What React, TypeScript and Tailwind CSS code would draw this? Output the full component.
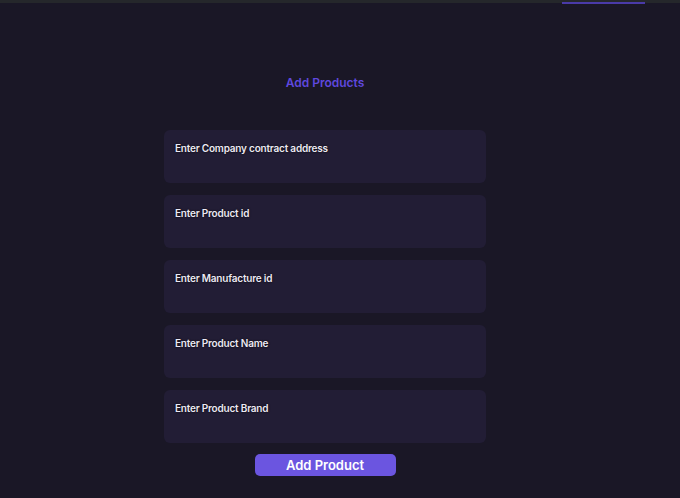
const fields = [
  'Enter Company contract address',
  'Enter Product id',
  'Enter Manufacture id',
  'Enter Product Name',
  'Enter Product Brand',
];

export default function App() {
  return (
    <div className="min-h-[498px] bg-[#1a1726] font-['Inter','Open_Sans',sans-serif] flex flex-col">
      <div className="h-[3px] bg-[#25272b] relative">
        <div className="absolute left-[562px] top-[2px] w-[83px] h-[2px] bg-[#4a3aa8]" />
      </div>
      <div className="flex flex-col items-center pt-[73px] pr-[30px]">
        <h1 className="text-[12px] font-semibold text-[#5f48de] leading-[14px]">Add Products</h1>
        <div className="mt-[40px] w-[322px] flex flex-col gap-[12px]">
          {fields.map((f) => (
            <div key={f} className="h-[53px] rounded-[6px] bg-[#221d35] px-[11px] pt-[12px]">
              <div className="text-[10px] font-semibold text-[#ece9f4] leading-[12px] tracking-[-0.02em] [text-shadow:0_0_2px_#000]">{f}</div>
            </div>
          ))}
        </div>
        <button className="mt-[11px] w-[141px] h-[22px] rounded-[5px] bg-[#6b55e0] text-white text-[13px] font-semibold leading-[22px]">
          Add Product
        </button>
      </div>
    </div>
  );
}
